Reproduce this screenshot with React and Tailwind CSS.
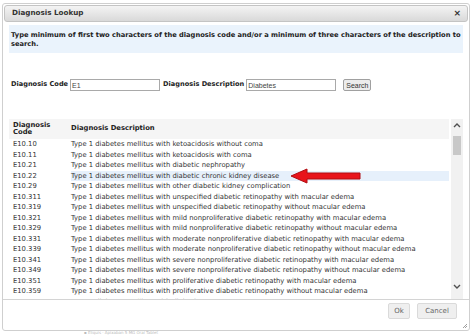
import React from 'react';

const rows = [
  ['E10.10', 'Type 1 diabetes mellitus with ketoacidosis without coma'],
  ['E10.11', 'Type 1 diabetes mellitus with ketoacidosis with coma'],
  ['E10.21', 'Type 1 diabetes mellitus with diabetic nephropathy'],
  ['E10.22', 'Type 1 diabetes mellitus with diabetic chronic kidney disease'],
  ['E10.29', 'Type 1 diabetes mellitus with other diabetic kidney complication'],
  ['E10.311', 'Type 1 diabetes mellitus with unspecified diabetic retinopathy with macular edema'],
  ['E10.319', 'Type 1 diabetes mellitus with unspecified diabetic retinopathy without macular edema'],
  ['E10.321', 'Type 1 diabetes mellitus with mild nonproliferative diabetic retinopathy with macular edema'],
  ['E10.329', 'Type 1 diabetes mellitus with mild nonproliferative diabetic retinopathy without macular edema'],
  ['E10.331', 'Type 1 diabetes mellitus with moderate nonproliferative diabetic retinopathy with macular edema'],
  ['E10.339', 'Type 1 diabetes mellitus with moderate nonproliferative diabetic retinopathy without macular edema'],
  ['E10.341', 'Type 1 diabetes mellitus with severe nonproliferative diabetic retinopathy with macular edema'],
  ['E10.349', 'Type 1 diabetes mellitus with severe nonproliferative diabetic retinopathy without macular edema'],
  ['E10.351', 'Type 1 diabetes mellitus with proliferative diabetic retinopathy with macular edema'],
  ['E10.359', 'Type 1 diabetes mellitus with proliferative diabetic retinopathy without macular edema'],
  ['E10.36', 'Type 1 diabetes mellitus with diabetic cataract'],
];

const SELECTED = 'E10.22';

export default function App() {
  return (
    <div className="relative w-[474px] h-[335px] bg-white overflow-hidden font-['DejaVu_Sans',sans-serif] text-[#222]">
      {/* dialog */}
      <div className="ml-[2px] mt-[3px] w-[468px] h-[328px] border border-[#cfcfcf] rounded-[3px] bg-white flex flex-col">
        {/* title bar */}
        <div className="mx-[1px] mt-[1px] h-[17px] rounded-[3px] border border-[#c4c4c4] bg-gradient-to-b from-[#f4f4f4] to-[#d9d9d9] flex items-center justify-between pl-[7px] pr-[6px]">
          <span className="text-[7.2px] font-bold text-[#333]">Diagnosis Lookup</span>
          <span className="text-[9px] font-bold text-[#333] leading-none">×</span>
        </div>

        <div className="px-[6px]">
          {/* instructions */}
          <div className="mt-[3px] h-[28px] bg-[#eaf3fc] pl-[2px] pt-[6px] text-[6.7px] font-bold leading-[9px] text-[#222]">
            Type minimum of first two characters of the diagnosis code and/or a minimum of three characters of the description to search.
          </div>

          {/* search form */}
          <div className="mt-[26px] h-[12px] flex items-center text-[6.6px] font-bold text-[#222]">
            <span className="ml-[2px]">Diagnosis Code</span>
            <input
              readOnly
              value="E1"
              className="ml-[2px] w-[90px] h-[12px] border border-[#a9a9a9] px-[1px] text-[7px] font-normal font-['Liberation_Sans',sans-serif] text-[#444] outline-none"
            />
            <span className="ml-[3px]">Diagnosis Description</span>
            <input
              readOnly
              value="Diabetes"
              className="ml-[2px] w-[90px] h-[12px] border border-[#a9a9a9] px-[1px] text-[7px] font-normal font-['Liberation_Sans',sans-serif] text-[#444] outline-none"
            />
            <button className="ml-[7px] h-[12px] px-[2px] border border-[#a0a0a0] rounded-[2px] bg-[#ececec] text-[7px] font-normal font-['Liberation_Sans',sans-serif] text-[#333] leading-none">
              Search
            </button>
          </div>

          {/* results */}
          <div className="mt-[28px] flex h-[180px]">
            <div className="relative w-[440px] overflow-hidden">
              <div className="h-[20px] bg-[#f5f5f5] flex items-center text-[6.8px] font-bold leading-[7.5px] text-[#222]">
                <div className="w-[62px] pl-[4px]">
                  Diagnosis
                  <br />
                  Code
                </div>
                <div>Diagnosis Description</div>
              </div>
              <div className="text-[6.8px] text-[#333]">
                {rows.map(([code, desc]) => (
                  <div key={code} className="h-[10.5px] flex items-center whitespace-nowrap">
                    <div className="w-[62px] pl-[4px]">{code}</div>
                    <div
                      className={
                        SELECTED === code
                          ? 'flex-1 h-full flex items-center bg-[#e6f0fb]'
                          : 'flex-1 h-full flex items-center'
                      }
                    >
                      {desc}
                    </div>
                  </div>
                ))}
              </div>
              {/* annotation arrow */}
              <svg className="absolute left-[281px] top-[49px]" width="72" height="16" viewBox="0 0 72 16">
                <path d="M1 8 L17 1 L17 5 L70 5 L70 11 L17 11 L17 15 Z" fill="#e8141b" stroke="#b00d12" strokeWidth="1" />
              </svg>
            </div>
            {/* scrollbar */}
            <div className="ml-[2px] w-[12px] bg-[#f1f1f1] flex flex-col items-center">
              <svg className="mt-[3px]" width="8" height="6" viewBox="0 0 8 6">
                <path d="M1 5 L4 2 L7 5" fill="none" stroke="#505050" strokeWidth="1.4" />
              </svg>
              <div className="mt-[8px] w-[8px] h-[19px] bg-[#c8c8c8]" />
              <div className="flex-1" />
              <svg className="mb-[9px]" width="8" height="6" viewBox="0 0 8 6">
                <path d="M1 1 L4 4 L7 1" fill="none" stroke="#505050" strokeWidth="1.4" />
              </svg>
            </div>
          </div>
        </div>

        {/* footer */}
        <div className="border-t border-[#d4d4d4] flex-1 flex justify-end items-start pt-[3px] pr-[12px] gap-[7px] relative">
          <button className="w-[22px] h-[16px] rounded-[2px] border border-[#dadada] bg-[#efefef] text-[7px] text-[#666]">
            Ok
          </button>
          <button className="w-[40px] h-[16px] rounded-[2px] border border-[#dadada] bg-[#efefef] text-[7px] text-[#666]">
            Cancel
          </button>
          <svg className="absolute right-[1px] bottom-[1px]" width="6" height="6" viewBox="0 0 6 6">
            <path d="M5 1 L1 5 M5 3 L3 5" stroke="#888" strokeWidth="0.8" />
          </svg>
        </div>
      </div>
      <div className="absolute left-[84px] top-[331px] text-[4px] leading-[4px] text-[#bbb] whitespace-nowrap">
        ▪ Eliquis · Apixaban 5 MG Oral Tablet
      </div>
    </div>
  );
}
